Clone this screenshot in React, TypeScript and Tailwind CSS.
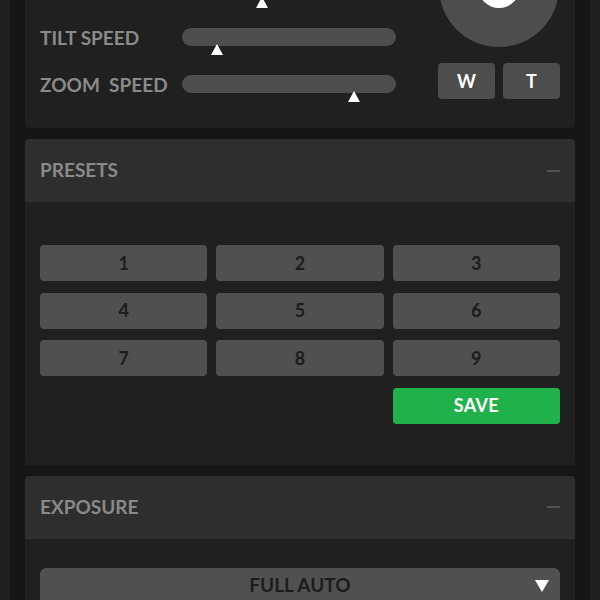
import React from 'react';

const sliders = [
  { label: 'PAN SPEED', value: 37.6 },
  { label: 'TILT SPEED', value: 16.8 },
  { label: 'ZOOM  SPEED', value: 80.8 },
];

const presets = ['1', '2', '3', '4', '5', '6', '7', '8', '9'];

const Panel: React.FC<{ title: string; bodyClass: string; children: React.ReactNode }> = ({ title, bodyClass, children }) => (
  <div className="rounded-[4px] bg-[#202020] overflow-hidden">
    <div className="h-[63px] bg-[#2e2e2e] px-[15px] flex items-center justify-between">
      <span className="text-[19px] font-bold text-[#8a8a8a]">{title}</span>
      <span className="block w-[13px] h-[2px] bg-[#545454]" />
    </div>
    <div className={bodyClass}>{children}</div>
  </div>
);

const App: React.FC = () => {
  return (
    <div className="h-screen overflow-hidden bg-[#1f1f1f] px-[10px]" style={{ fontFamily: 'Lato, "Open Sans", sans-serif' }}>
      <div className="h-full bg-[#161616] px-[15px] flex flex-col">
        <div className="-mt-[97px] flex flex-col gap-[11px]">
          {/* PTZ controls */}
          <div className="rounded-[4px] bg-[#202020] px-[15px] pt-[24px] pb-[29px] flex items-start">
            <div className="pt-[54px] flex flex-col gap-[29px]">
              {sliders.map((s) => (
                <div key={s.label} className="flex items-center h-[18px]">
                  <span className="w-[142px] text-[19px] font-bold text-[#8a8a8a] whitespace-pre leading-none">{s.label}</span>
                  <div className="relative w-[214px] h-[18px] rounded-full bg-[#4d4d4d]">
                    <span
                      className="absolute top-[16px] -ml-[6.5px] w-0 h-0 border-l-[6.5px] border-r-[6.5px] border-b-[11px] border-l-transparent border-r-transparent border-b-white"
                      style={{ left: `${s.value}%` }}
                    />
                  </div>
                </div>
              ))}
            </div>
            <div className="ml-auto w-[122px] flex flex-col items-center">
              <div className="w-[120px] h-[120px] rounded-full bg-[#4d4d4d] flex items-center justify-center">
                <div className="w-[42px] h-[42px] rounded-full bg-white" />
              </div>
              <div className="mt-[16px] w-full flex gap-[8px]">
                <button className="flex-1 h-[36px] rounded-[4px] bg-[#4d4d4d] text-white text-[18px] font-bold">W</button>
                <button className="flex-1 h-[36px] rounded-[4px] bg-[#4d4d4d] text-white text-[18px] font-bold">T</button>
              </div>
            </div>
          </div>

          {/* Presets */}
          <Panel title="PRESETS" bodyClass="px-[15px] pt-[43px] pb-[41px]">
            <div className="grid grid-cols-3 gap-x-[9px] gap-y-[11.5px]">
              {presets.map((p) => (
                <button key={p} className="h-[36px] rounded-[4px] bg-[#505050] text-[#1c1c1c] text-[18px] font-bold">
                  {p}
                </button>
              ))}
              <button className="col-start-3 h-[36px] rounded-[4px] bg-[#21b14b] text-white text-[18px] font-bold tracking-[0.3px]">
                SAVE
              </button>
            </div>
          </Panel>

          {/* Exposure */}
          <Panel title="EXPOSURE" bodyClass="px-[15px] pt-[29px] pb-[41px]">
            <div className="relative h-[36px] rounded-[6px] bg-[#505050] flex items-center justify-center">
              <span className="text-[19px] font-bold text-[#1c1c1c]">FULL AUTO</span>
              <span className="absolute right-[11px] top-[12px] w-0 h-0 border-l-[7px] border-r-[7px] border-t-[12px] border-l-transparent border-r-transparent border-t-white" />
            </div>
          </Panel>
        </div>
      </div>
    </div>
  );
};

export default App;
